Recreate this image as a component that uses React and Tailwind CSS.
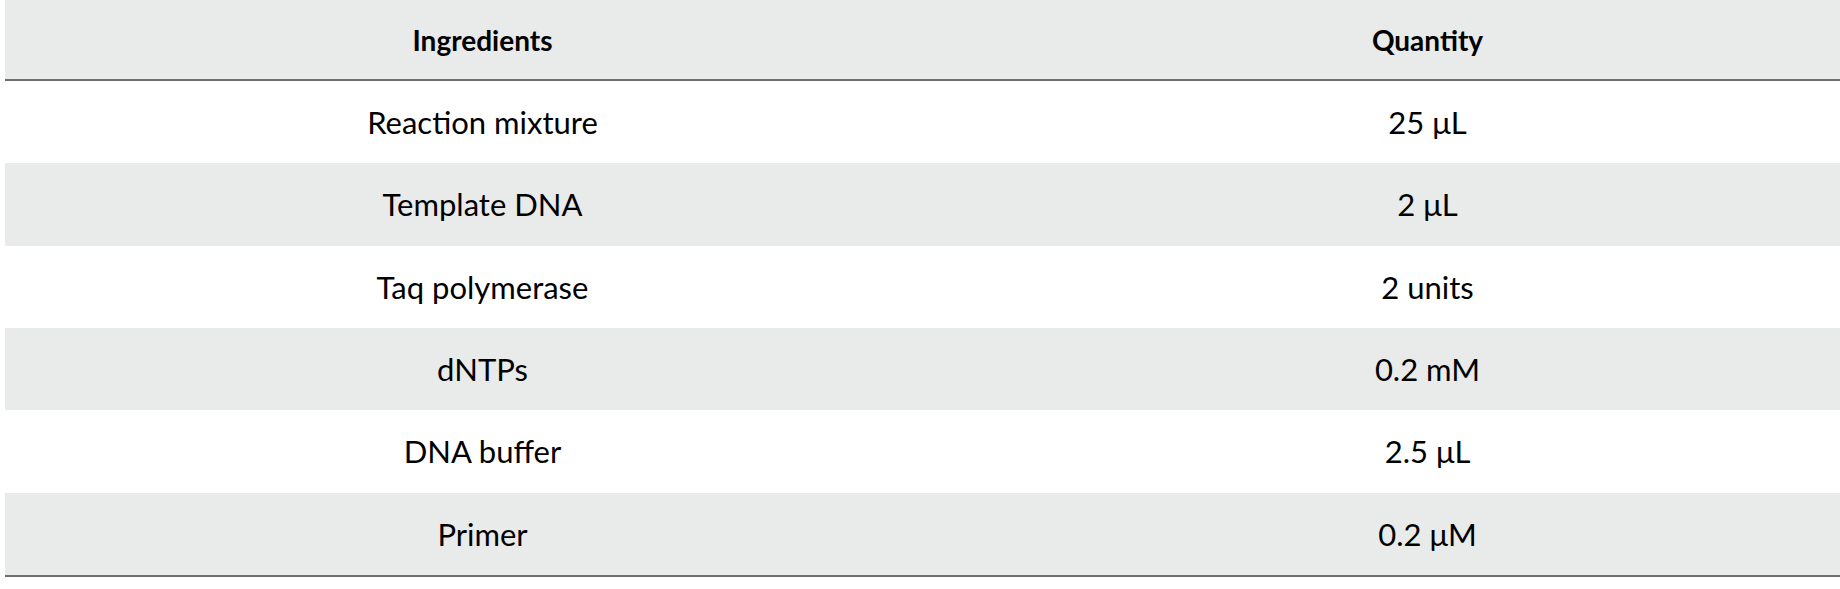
import React from "react";

const rows = [
  { name: "Reaction mixture", qty: "25 μL" },
  { name: "Template DNA", qty: "2 μL" },
  { name: "Taq polymerase", qty: "2 units" },
  { name: "dNTPs", qty: "0.2 mM" },
  { name: "DNA buffer", qty: "2.5 μL" },
  { name: "Primer", qty: "0.2 μM" },
];

const App = () => {
  return (
    <div className="w-[1840px] h-[589px] overflow-hidden bg-white pl-[5px] font-['Lato',sans-serif] text-black">
      <div className="w-[1890px]">
        {/* Cabecera */}
        <div className="flex h-[81px] bg-[#e9eaea] border-b-2 border-[#6e6e6e] text-[28px] font-bold">
          <div className="w-[955px] flex items-center justify-center">Ingredients</div>
          <div className="w-[935px] flex items-center justify-center">Quantity</div>
        </div>

        {/* Filas */}
        {rows.map((row, i) => (
          <div
            key={row.name}
            className={`flex h-[82.33px] text-[31px] ${i % 2 === 1 ? "bg-[#e9eaea]" : "bg-white"}`}
          >
            <div className="w-[955px] flex items-center justify-center">{row.name}</div>
            <div className="w-[935px] flex items-center justify-center">{row.qty}</div>
          </div>
        ))}
        <div className="h-[2px] bg-[#6e6e6e]" />
      </div>
    </div>
  );
};

export default App;
